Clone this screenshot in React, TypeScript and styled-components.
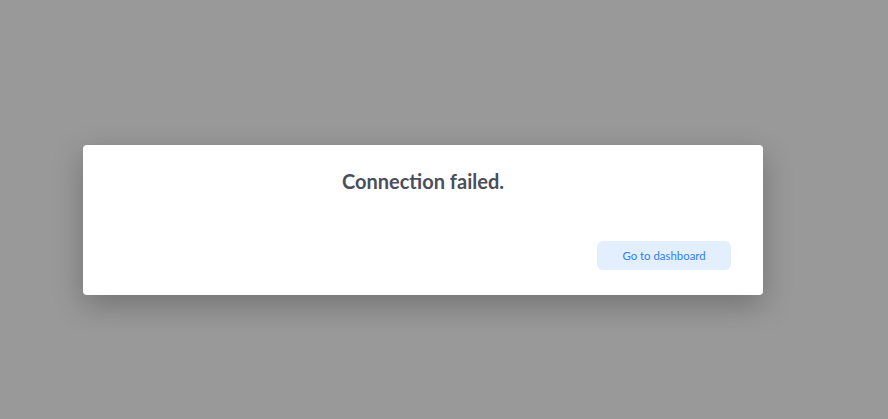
import React from "react";
import styled, { createGlobalStyle } from "styled-components";

const Global = createGlobalStyle`
  html, body { margin: 0; padding: 0; height: 100%; }
  body { background: #999999; font-family: Lato, "Noto Sans", sans-serif; }
  #root { height: 100%; }
`;

const Overlay = styled.div`
  width: 888px;
  height: 419px;
  display: flex;
  align-items: flex-start;
  justify-content: flex-start;
  padding: 145px 0 0 83px;
  box-sizing: border-box;
  background: #999999;
`;

const Modal = styled.div`
  width: 680px;
  height: 150px;
  box-sizing: border-box;
  background: #ffffff;
  border-radius: 4px;
  box-shadow: 0 10px 30px rgba(0, 0, 0, 0.25);
  padding: 23px 32px 25px;
  display: flex;
  flex-direction: column;
`;

const Title = styled.h2`
  margin: 0;
  text-align: center;
  font-family: Lato, sans-serif;
  font-weight: 700;
  font-size: 20px;
  line-height: 26px;
  color: #4b4e5b;
`;

const Footer = styled.div`
  margin-top: auto;
  display: flex;
  justify-content: flex-end;
`;

const Button = styled.button`
  width: 134px;
  height: 29px;
  border: none;
  border-radius: 6px;
  background: #e3effd;
  color: #2f80ed;
  font-family: Lato, sans-serif;
  font-size: 11.4px;
  font-weight: 400;
  cursor: pointer;
  padding: 0;
`;

export default function App() {
  return (
    <>
      <Global />
      <Overlay>
        <Modal>
          <Title>Connection failed.</Title>
          <Footer>
            <Button>Go to dashboard</Button>
          </Footer>
        </Modal>
      </Overlay>
    </>
  );
}
